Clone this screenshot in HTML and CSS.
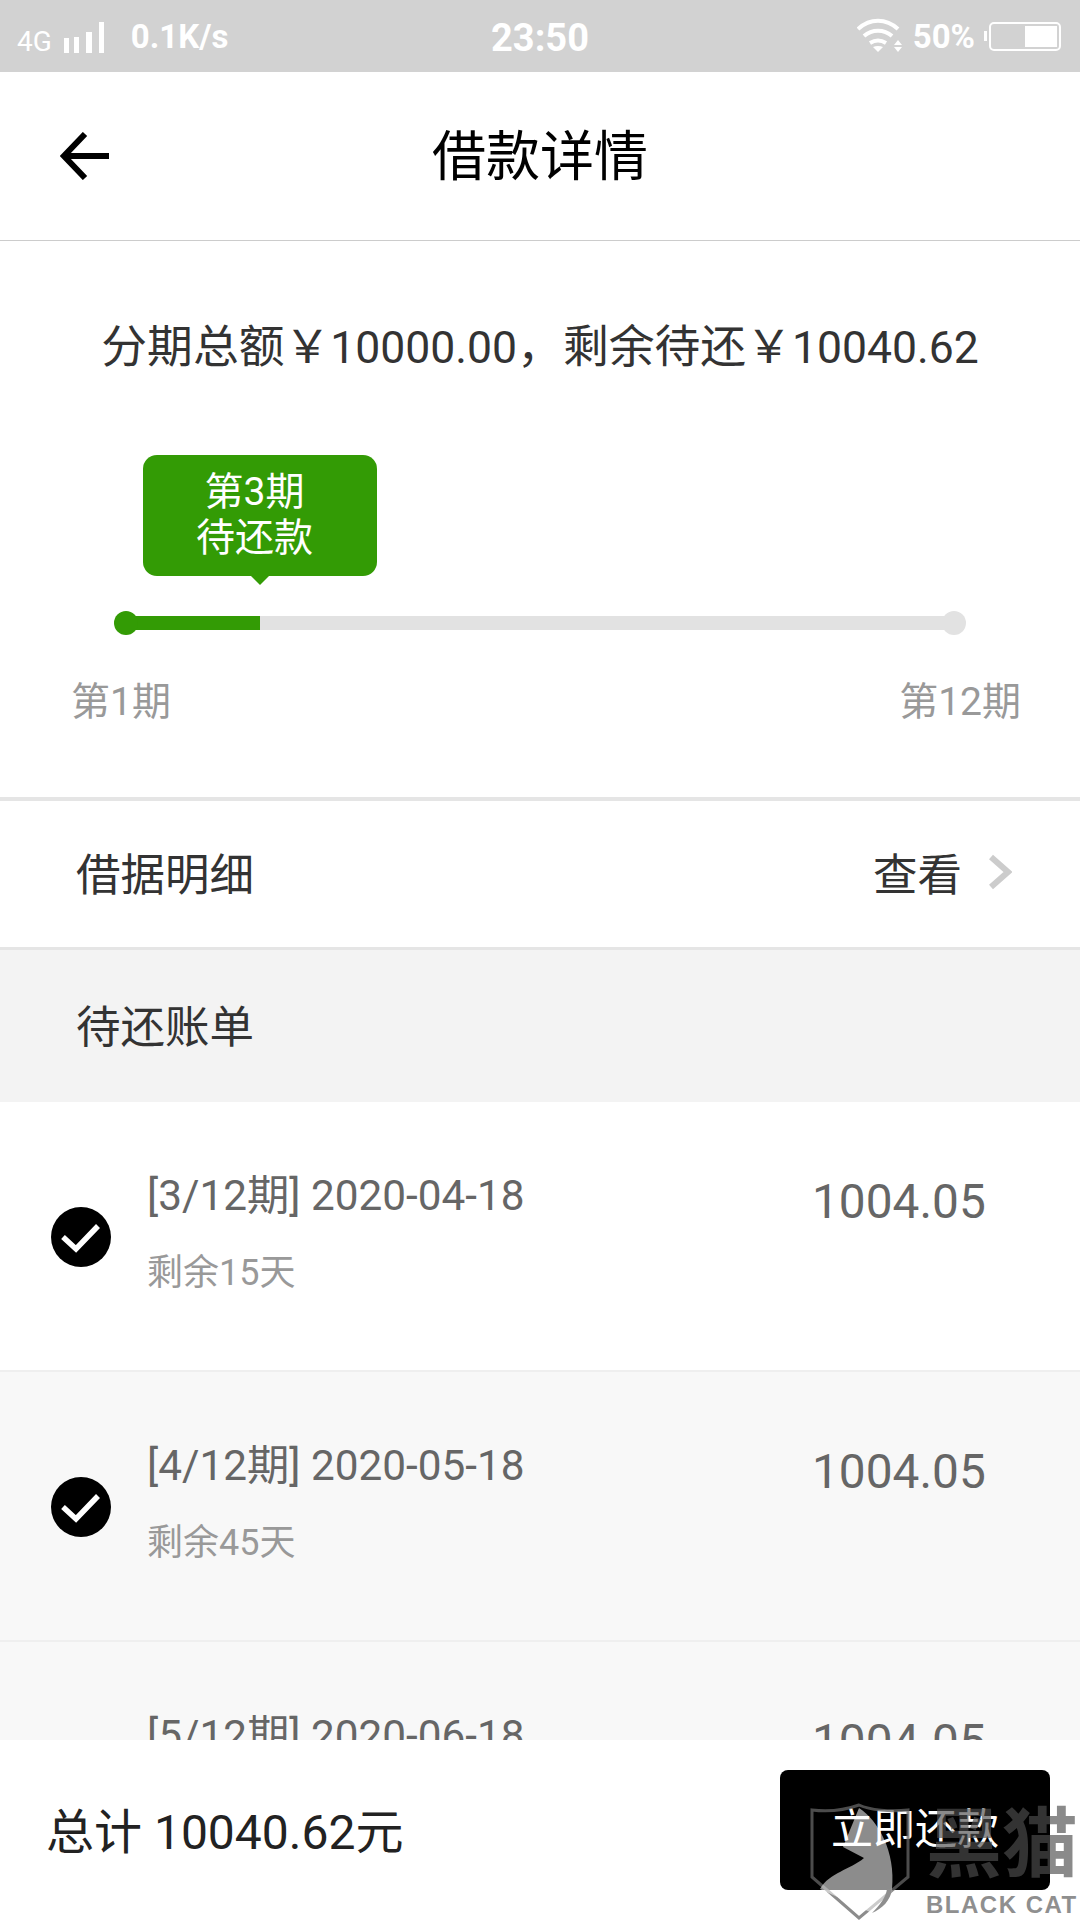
FILE: index.html
```html
<!DOCTYPE html>
<html lang="zh-CN">
<head>
    <meta charset="UTF-8">
    <title>借款详情</title>
    <link rel="stylesheet" href="styles.css">
</head>
<body>
<div class="screen">
    <div class="status-bar">
        <div class="status-left">
            <span class="net">4G</span>
            <svg class="signal" width="45" height="33" viewBox="0 0 45 33"><path d="M2 17h5v15H2zM12 16h5v16h-5zM24 11h6v21h-6zM37 1h5v31h-5z" fill="#fff"/></svg>
            <span class="speed">0.1K/s</span>
        </div>
        <div class="status-time">23:50</div>
        <div class="status-right">
            <svg class="wifi" width="46" height="34" viewBox="0 0 46 34" fill="none" stroke="#fff" stroke-width="4"><path d="M1 11c12-11 28-11 40 0M7 18c8-7 20-7 28 0M13 25c5-3 11-3 16 0"/><path d="M16 29l5 5 5-5c-3-1.500-7-1.500-10 0z" fill="#fff" stroke="none"/><path d="M41 22l4 5h-8zM37 29h8l-4 5z" fill="#fff" stroke="none"/></svg>
            <span class="batt-text">50%</span>
            <div class="battery"><div class="battery-level"></div></div>
        </div>
    </div>

    <div class="header">
        <svg class="back" width="50" height="48" viewBox="0 0 50 48" fill="none" stroke="#000" stroke-width="6"><path d="M49 24H6M25 2L4 24l21 22"/></svg>
        <div class="title">借款详情</div>
    </div>

    <div class="summary">分期总额￥<span class="num">10000.00</span>，剩余待还￥<span class="num">10040.62</span></div>

    <div class="progress">
        <div class="tip">
            <div>第3期</div>
            <div>待还款</div>
        </div>
        <div class="track">
            <div class="track-fill"></div>
            <div class="dot dot-start"></div>
            <div class="dot dot-end"></div>
        </div>
        <div class="range">
            <span>第1期</span>
            <span>第12期</span>
        </div>
    </div>

    <div class="note-row">
        <span>借据明细</span>
        <div class="note-link">
            <span>查看</span>
            <svg width="24" height="36" viewBox="0 0 24 36" fill="none" stroke="#ccc" stroke-width="6"><path d="M3 3l17 15L3 33"/></svg>
        </div>
    </div>

    <div class="section-title">待还账单</div>

    <div class="bills">
        <div class="bill">
            <svg class="check" width="60" height="60" viewBox="0 0 60 60"><circle cx="30" cy="30" r="30" fill="#000"/><path d="M12 30l13 12 22-23" fill="none" stroke="#fff" stroke-width="5.500"/></svg>
            <div class="bill-info">
                <div class="bill-name">[3/12期] 2020-04-18</div>
                <div class="bill-left">剩余15天</div>
            </div>
            <div class="bill-amount">1004.05</div>
        </div>
        <div class="bill bill-alt">
            <svg class="check" width="60" height="60" viewBox="0 0 60 60"><circle cx="30" cy="30" r="30" fill="#000"/><path d="M12 30l13 12 22-23" fill="none" stroke="#fff" stroke-width="5.500"/></svg>
            <div class="bill-info">
                <div class="bill-name">[4/12期] 2020-05-18</div>
                <div class="bill-left">剩余45天</div>
            </div>
            <div class="bill-amount">1004.05</div>
        </div>
        <div class="bill bill-alt">
            <svg class="check" width="60" height="60" viewBox="0 0 60 60"><circle cx="30" cy="30" r="30" fill="#000"/><path d="M12 30l13 12 22-23" fill="none" stroke="#fff" stroke-width="5.500"/></svg>
            <div class="bill-info">
                <div class="bill-name">[5/12期] 2020-06-18</div>
            </div>
            <div class="bill-amount">1004.05</div>
        </div>
    </div>

    <div class="footer">
        <div class="total">总计 10040.62元</div>
        <div class="pay-btn">立即还款</div>
    </div>

    <!-- watermark sits over the button -->
    <div class="watermark">
        <svg class="wm-logo" width="130" height="120" viewBox="0 0 130 120">
            <path d="M12 10V77l47 41 49-41V10C90 12 70 10 59 5 45 10 28 12 12 10z" fill="none" stroke="#666" stroke-opacity=".75" stroke-width="3"/>
            <path d="M59 8c19 12 37 44 33 81-1 10-10 20-20 24L20 89c10-17 30-19 44-31L43 47C46 40 50 30 59 8z" fill="#fff" fill-opacity=".55"/>
            <path d="M92 89c-1 11-10 20-20 24 8-8 14-16 15-24z" fill="#8e8e8e"/>
        </svg>
        <div class="wm-text">
            <div class="wm-cn">黑猫</div>
            <div class="wm-en">BLACK CAT</div>
        </div>
    </div>
</div>
</body>
</html>
```

FILE: styles.css
```css
* {
    box-sizing: border-box;
}
body {
    margin: 0;
    font-family: Roboto, "Noto Sans CJK SC", sans-serif;
    background: #fff;
}
.screen {
    position: relative;
    width: 1080px;
    height: 1920px;
    overflow: hidden;
    display: flex;
    flex-direction: column;
}
.status-bar {
    flex: none;
    height: 72px;
    background: #d2d2d2;
    color: #fff;
    position: relative;
    display: flex;
    align-items: center;
    justify-content: space-between;
    padding: 0 19px 0 17px;
    font-weight: 700;
}
.status-left, .status-right {
    display: flex;
    align-items: center;
}
.net {
    font-size: 28px;
    font-weight: 400;
    margin-top: 10px;
}
.signal {
    margin: 3px 0 0 10px;
}
.speed {
    font-size: 33px;
    margin-left: 24px;
}
.status-time {
    position: absolute;
    left: 0;
    right: 0;
    top: 15px;
    text-align: center;
    font-size: 38px;
    line-height: 46px;
}
.wifi {
    margin-top: -2px;
}
.batt-text {
    font-size: 33px;
    margin-left: 10px;
}
.battery {
    position: relative;
    width: 72px;
    height: 29px;
    margin-left: 14px;
    border: 2px solid #fff;
    border-radius: 5px;
    padding: 2px;
    display: flex;
    justify-content: flex-end;
}
.battery::before {
    content: "";
    position: absolute;
    left: -7px;
    top: 7px;
    width: 3px;
    height: 10px;
    background: #fff;
}
.battery-level {
    width: 32px;
    background: #fff;
}
.header {
    flex: none;
    height: 169px;
    position: relative;
    display: flex;
    align-items: center;
    justify-content: center;
    padding-bottom: 8px;
    border-bottom: 1px solid #ccc;
}
.back {
    position: absolute;
    left: 60px;
    top: 60px;
}
.title {
    font-size: 54px;
    color: #000;
}
.summary {
    flex: none;
    height: 212px;
    padding-top: 77px;
    text-align: center;
    font-size: 45.800px;
    line-height: 60px;
    color: #333;
    white-space: nowrap;
}
.num {
    font-size: 44.500px;
}
.progress {
    flex: none;
    height: 348px;
    padding-top: 2px;
    border-bottom: 4px solid #e5e5e5;
}
.tip {
    position: relative;
    width: 234px;
    height: 121px;
    margin-left: 143px;
    padding: 14px 11px 0 0;
    background: #339b05;
    border-radius: 14px;
    color: #fff;
    text-align: center;
    font-size: 39px;
    line-height: 46px;
}
.tip::after {
    content: "";
    position: absolute;
    left: 108px;
    bottom: -9px;
    border-style: solid;
    border-width: 9px 9px 0;
    border-color: #339b05 transparent transparent;
}
.track {
    position: relative;
    height: 14px;
    margin: 40px 126px 0 125px;
    background: #e2e2e2;
}
.track-fill {
    width: 135px;
    height: 14px;
    background: #339b05;
}
.dot {
    position: absolute;
    top: -5px;
    width: 24px;
    height: 24px;
    border-radius: 50%;
}
.dot-start {
    left: -11px;
    background: #339b05;
}
.dot-end {
    right: -12px;
    background: #e2e2e2;
}
.range {
    display: flex;
    justify-content: space-between;
    padding: 45px 59px 0 71px;
    font-size: 39px;
    line-height: 54px;
    color: #999;
}
.note-row {
    flex: none;
    height: 149px;
    display: flex;
    align-items: center;
    justify-content: space-between;
    padding: 0 68px 5px 76px;
    border-bottom: 3px solid #e5e5e5;
    font-size: 44.500px;
    color: #333;
}
.note-link {
    display: flex;
    align-items: center;
    gap: 26px;
}
.section-title {
    flex: none;
    height: 152px;
    padding: 0 0 5px 76px;
    display: flex;
    align-items: center;
    background: #f3f3f3;
    font-size: 44.500px;
    color: #333;
}
.bills {
    flex: 1;
    min-height: 0;
    overflow: hidden;
}
.bill {
    height: 270px;
    display: flex;
    padding-left: 51px;
    border-bottom: 2px solid #efefef;
}
.bill-alt {
    background: #f8f8f8;
}
.check {
    flex: none;
    margin-top: 105px;
}
.bill-info {
    width: 701px;
    padding: 64px 0 0 36px;
}
.bill-name {
    font-size: 42.300px;
    line-height: 60px;
    color: #666;
}
.bill-left {
    margin-top: 22px;
    font-size: 36px;
    line-height: 50px;
    color: #999;
}
.bill-amount {
    padding-top: 70px;
    font-size: 47.800px;
    line-height: 60px;
    color: #666;
}
.footer {
    flex: none;
    height: 180px;
    display: flex;
    align-items: center;
    justify-content: space-between;
    padding: 0 30px 0 46px;
    background: #fff;
}
.total {
    margin-top: -4px;
    font-size: 48px;
    color: #222;
}
.pay-btn {
    width: 270px;
    height: 120px;
    background: #000;
    border-radius: 8px;
    color: #fff;
    font-size: 42px;
    line-height: 120px;
    text-align: center;
}
.watermark {
    position: absolute;
    left: 800px;
    top: 1800px;
    width: 280px;
    display: flex;
    pointer-events: none;
}
.wm-logo {
    flex: none;
}
.wm-text {
    flex: none;
    width: 155px;
    margin-left: -4px;
}
.wm-cn {
    height: 82px;
    font-size: 76px;
    line-height: 90px;
    font-weight: 700;
    color: rgba(77, 77, 77, 0.66);
    white-space: nowrap;
}
.wm-en {
    font-family: "Liberation Sans", sans-serif;
    font-size: 24px;
    font-weight: 700;
    line-height: 26px;
    letter-spacing: 1.500px;
    color: #8f8f8f;
    white-space: nowrap;
    margin-top: 10px;
}
```
